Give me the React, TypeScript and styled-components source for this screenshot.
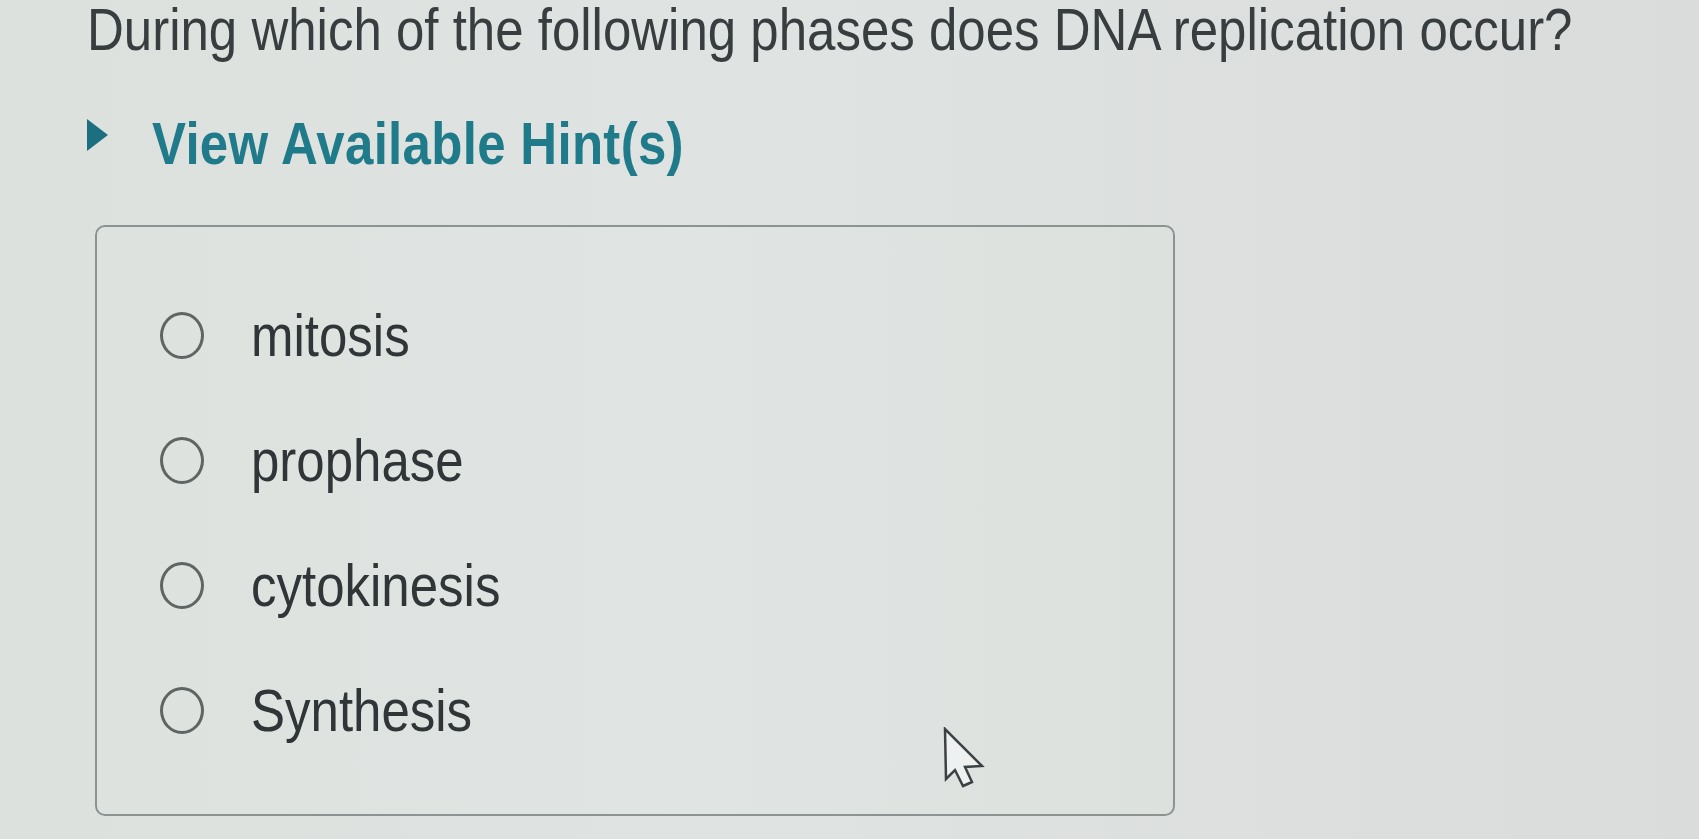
import { FC } from 'react';
import styled, { createGlobalStyle, css } from 'styled-components';

const GlobalStyle = createGlobalStyle`
  html, body {
    margin: 0;
    padding: 0;
    background: #dcdfdc;
  }
  body {
    font-family: "Liberation Sans", Arial, sans-serif;
  }
`;

// the photo of the screen stretches the glyphs a little in height
const tallText = css`
  display: inline-block;
  transform: scaleY(1.15);
  transform-origin: 0 80%;
`;

const Page = styled.main`
  width: 1699px;
  height: 839px;
  box-sizing: border-box;
  padding: 4px 0 0 87px;
  overflow: hidden;
  background: linear-gradient(90deg, #dde1de 0%, #dfe3e1 45%, #d9dcda 100%);
`;

const Title = styled.h2`
  margin: 0;
  font-size: 51px;
  line-height: 58px;
  font-weight: 400;
  color: #383d40;
  white-space: nowrap;

  span {
    ${tallText}
  }
`;

const HintToggle = styled.div`
  display: flex;
  align-items: flex-start;
  gap: 44px;
  margin-top: 56px;
  cursor: pointer;
`;

const HintArrow = styled.span`
  width: 0;
  height: 0;
  margin-top: 1px;
  border-top: 16px solid transparent;
  border-bottom: 16px solid transparent;
  border-left: 21px solid #1c6f80;
`;

const HintLabel = styled.span`
  font-size: 51px;
  line-height: 58px;
  font-weight: 700;
  letter-spacing: 0.3px;
  color: #1f7b8a;
  ${tallText}
`;

const ChoiceBox = styled.div`
  position: relative;
  width: 1080px;
  box-sizing: border-box;
  margin: 49px 0 0 8px;
  padding: 46px 0 41px 63px;
  border: 2px solid #8b9492;
  border-radius: 10px;
  background: linear-gradient(90deg, #dde2df 0%, #e0e5e3 55%, #dce1de 100%);
`;

const ChoiceRow = styled.label`
  display: flex;
  align-items: center;
  gap: 47px;
  height: 125px;
`;

const Radio = styled.span`
  width: 44px;
  height: 47px;
  box-sizing: border-box;
  border: 3px solid #5e6563;
  border-radius: 50%;
  flex-shrink: 0;
`;

const ChoiceLabel = styled.span`
  padding-top: 6px;
  font-size: 51px;
  line-height: 58px;
  color: #303538;
  ${tallText}
`;

const Cursor = styled.svg`
  position: absolute;
  left: 846px;
  top: 500px;
  width: 42px;
  height: 62px;
`;

const choices = ['mitosis', 'prophase', 'cytokinesis', 'Synthesis'];

const App: FC = () => {
  return (
    <>
      <GlobalStyle />
      <Page>
        <Title>
          <span>During which of the following phases does DNA replication occur?</span>
        </Title>
        <HintToggle>
          <HintArrow />
          <HintLabel>View Available Hint(s)</HintLabel>
        </HintToggle>
        <ChoiceBox>
          {choices.map((choice) => (
            <ChoiceRow key={choice}>
              <Radio />
              <ChoiceLabel>{choice}</ChoiceLabel>
            </ChoiceRow>
          ))}
          <Cursor viewBox="-2 -2 42 62">
            <path
              d="M0 0 L1 50 L10 41 L18 57 L27 53 L20 38 L37 37 Z"
              fill="#eef1ef"
              stroke="#3c4244"
              strokeWidth="2.5"
              strokeLinejoin="miter"
            />
          </Cursor>
        </ChoiceBox>
      </Page>
    </>
  );
};

export default App;
